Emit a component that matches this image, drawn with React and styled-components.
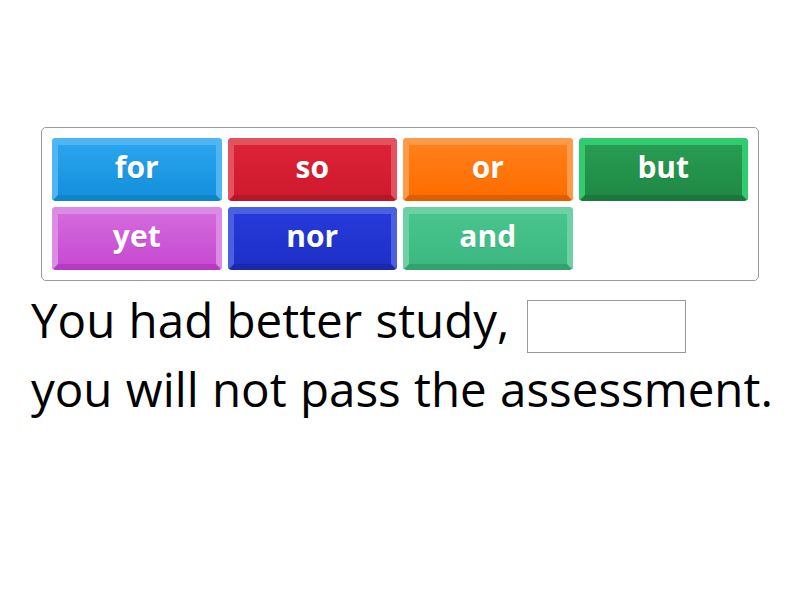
import React from "react";
import styled, { createGlobalStyle } from "styled-components";

const Global = createGlobalStyle`
  html, body { margin: 0; padding: 0; background: #fff; }
  body { font-family: "Open Sans", "Noto Sans", sans-serif; }
`;

const Page = styled.div`
  width: 800px;
  height: 600px;
  padding-top: 127px;
  box-sizing: border-box;
`;

const Bank = styled.div`
  width: 718px;
  margin: 0 auto;
  box-sizing: border-box;
  border: 1px solid #9a9a9a;
  border-radius: 5px;
  padding: 10px 10px 10px 10px;
  display: grid;
  grid-template-columns: repeat(4, 1fr);
  grid-auto-rows: 63px;
  gap: 6px 6px;
`;

const Tile = styled.div`
  box-sizing: border-box;
  border-radius: 4px;
  border-style: solid;
  border-width: 7px 6px 6px 6px;
  border-color: ${p => p.$edge} ${p => p.$edge} ${p => p.$bottom} ${p => p.$edge};
  background: linear-gradient(${p => p.$top}, ${p => p.$low});
  display: flex;
  align-items: center;
  justify-content: center;
  color: #fff;
  font-weight: 700;
  font-size: 30px;
  line-height: 1;
  padding-bottom: 7px;
  text-shadow: 0 1px 1px rgba(0,0,0,0.12);
`;

const Sentence = styled.div`
  padding-left: 31px;
  margin-top: 4px;
  font-size: 47.5px;
  line-height: 69px;
  color: #000;
`;

const Line = styled.div`
  white-space: nowrap;
  word-spacing: 1px;
`;

const Blank = styled.span`
  display: inline-block;
  vertical-align: middle;
  width: 159px;
  height: 53px;
  box-sizing: border-box;
  border: 1px solid #999;
  margin-left: 18px;
  position: relative;
  top: 1px;
  background: #fff;
`;

const tiles = [
  { t: "for", edge: "#4fb6f3", top: "#2aa4ed", low: "#1490dc", bottom: "#0f84cb" },
  { t: "so", edge: "#e4525f", top: "#dd2237", low: "#cf1a2e", bottom: "#b71628" },
  { t: "or", edge: "#ff9a48", top: "#ff8019", low: "#ff6d00", bottom: "#df5e00" },
  { t: "but", edge: "#30cc6e", top: "#289c52", low: "#1f8a45", bottom: "#1b773b" },
  { t: "yet", edge: "#dd8ce5", top: "#d469dc", low: "#c74bd2", bottom: "#b63ac2" },
  { t: "nor", edge: "#4b5fe1", top: "#2639d9", low: "#1f30c8", bottom: "#1a29aa" },
  { t: "and", edge: "#6dd1a5", top: "#48c58e", low: "#3cb880", bottom: "#32a36e" },
];

export default function App() {
  return (
    <>
      <Global />
      <Page>
        <Bank>
          {tiles.map(x => (
            <Tile key={x.t} $edge={x.edge} $top={x.top} $low={x.low} $bottom={x.bottom}>
              {x.t}
            </Tile>
          ))}
        </Bank>
        <Sentence>
          <Line>
            You had better study,<Blank />
          </Line>
          <Line>you will not pass the assessment.</Line>
        </Sentence>
      </Page>
    </>
  );
}
